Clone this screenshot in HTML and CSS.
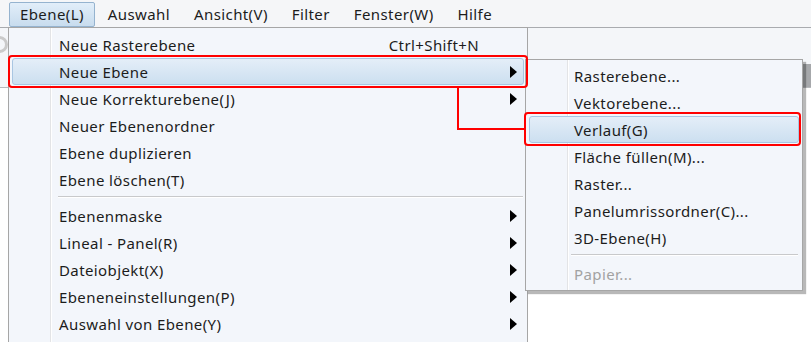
FILE: index.html
```html
<!DOCTYPE html>
<html>
<head>
    <title>Ebene Menü</title>
    <link rel="stylesheet" href="styles.css">
</head>
<body>
    <div class="window">
        <!-- Menu bar -->
        <div class="menubar">
            <span class="menubar-item active">Ebene(L)</span>
            <span class="menubar-item">Auswahl</span>
            <span class="menubar-item">Ansicht(V)</span>
            <span class="menubar-item">Filter</span>
            <span class="menubar-item">Fenster(W)</span>
            <span class="menubar-item">Hilfe</span>
        </div>
        <!-- Toolbar (mostly hidden behind the menu) -->
        <div class="toolbar">
            <span class="tool-icon"></span>
            <span class="tool-box"></span>
        </div>
        <div class="workspace"></div>

        <!-- Ebene menu -->
        <div class="menu main-menu">
            <div class="menu-item"><span class="label">Neue Rasterebene</span><span class="shortcut">Ctrl+Shift+N</span></div>
            <div class="menu-item selected"><span class="label">Neue Ebene</span><span class="arrow"></span></div>
            <div class="menu-item"><span class="label">Neue Korrekturebene(J)</span><span class="arrow"></span></div>
            <div class="menu-item"><span class="label">Neuer Ebenenordner</span></div>
            <div class="menu-item"><span class="label">Ebene duplizieren</span></div>
            <div class="menu-item"><span class="label">Ebene löschen(T)</span></div>
            <div class="separator"></div>
            <div class="menu-item"><span class="label">Ebenenmaske</span><span class="arrow"></span></div>
            <div class="menu-item"><span class="label">Lineal - Panel(R)</span><span class="arrow"></span></div>
            <div class="menu-item"><span class="label">Dateiobjekt(X)</span><span class="arrow"></span></div>
            <div class="menu-item"><span class="label">Ebeneneinstellungen(P)</span><span class="arrow"></span></div>
            <div class="menu-item"><span class="label">Auswahl von Ebene(Y)</span><span class="arrow"></span></div>
        </div>

        <!-- Neue Ebene submenu -->
        <div class="menu sub-menu">
            <div class="menu-item"><span class="label">Rasterebene...</span></div>
            <div class="menu-item"><span class="label">Vektorebene...</span></div>
            <div class="menu-item selected"><span class="label">Verlauf(G)</span></div>
            <div class="menu-item"><span class="label">Fläche füllen(M)...</span></div>
            <div class="menu-item"><span class="label">Raster...</span></div>
            <div class="menu-item"><span class="label">Panelumrissordner(C)...</span></div>
            <div class="menu-item"><span class="label">3D-Ebene(H)</span></div>
            <div class="separator"></div>
            <div class="menu-item disabled"><span class="label">Papier...</span></div>
        </div>

        <!-- Red annotation marks -->
        <div class="mark mark-main"></div>
        <div class="mark mark-sub"></div>
        <div class="mark-line"></div>
    </div>
</body>
</html>
```

FILE: styles.css
```css
body {
    margin: 0;
    font-family: "Noto Sans", "Liberation Sans", sans-serif;
    font-size: 15px;
    letter-spacing: 0.4px;
    color: #1c1c1c;
    background-color: #fff;
}

.window {
    position: relative;
    width: 811px;
    height: 342px;
    overflow: hidden;
    display: flex;
    flex-direction: column;
}

/* Menu bar */
.menubar {
    height: 27px;
    display: flex;
    align-items: center;
    padding-left: 9px;
    background-color: #f5f6f8;
    border-bottom: 1px solid #a9abaf;
}

.menubar-item {
    height: 23px;
    line-height: 22px;
    padding: 0 10px;
    margin-right: 2px;
    margin-top: 1px;
    border: 1px solid transparent;
    border-radius: 2px;
}

.menubar-item.active {
    border-color: #95b3cf;
    background: linear-gradient(#e2eef9, #c8dcee);
}

/* Toolbar */
.toolbar {
    height: 59px;
    background-color: #f4f6f9;
    border-bottom: 1px solid #b7b9bc;
    position: relative;
}

.tool-icon {
    position: absolute;
    left: -9px;
    top: 8px;
    width: 11px;
    height: 11px;
    border: 3px solid #cacaca;
    border-radius: 50%;
}

.tool-box {
    position: absolute;
    right: 0;
    top: 36px;
    width: 10px;
    height: 23px;
    background-color: #a6a8ab;
}

.workspace {
    flex: 1;
    background-color: #fff;
}

/* Menus */
.menu {
    position: absolute;
    background-color: #f3f6fb;
    border: 1px solid #a6a6a6;
    background-image: linear-gradient(#e3e4e6, #e3e4e6), linear-gradient(#fff, #fff);
    background-repeat: no-repeat;
    background-size: 1px 100%, 1px 100%;
}

.main-menu {
    left: 8px;
    top: 27px;
    width: 518px;
    padding: 3px 0 30px;
    background-position: 41px 0, 42px 0;
}

.sub-menu {
    left: 525px;
    top: 59px;
    width: 276px;
    padding: 2px 0 3px;
    background-position: 41px 0, 42px 0;
    box-shadow: 3px 3px 1px rgba(0, 0, 0, 0.28);
}

.menu-item {
    height: 25px;
    margin: 0 3px;
    padding: 0 6px 0 46px;
    display: flex;
    align-items: center;
    border: 1px solid transparent;
    border-radius: 3px;
    white-space: nowrap;
}

.sub-menu .menu-item {
    padding-left: 44px;
}

.menu-item .label {
    flex: 1;
}

.menu-item .shortcut {
    margin-right: 38px;
}

.menu-item.selected {
    border-color: #a9c6e2;
    background: linear-gradient(#e4eef8, #ccdff0);
}

.menu-item.disabled {
    color: #a2a2a2;
}

.arrow {
    width: 0;
    height: 0;
    border-left: 7px solid #000;
    border-top: 6px solid transparent;
    border-bottom: 6px solid transparent;
}

.separator {
    height: 1px;
    margin: 3px 4px 4px 49px;
    background-color: #c8c9cb;
    border-bottom: 1px solid #fff;
}

.sub-menu .separator {
    margin: 3px 4px 4px 45px;
}

/* Red annotation marks */
.mark {
    position: absolute;
    border: 2px solid #f00;
    border-radius: 4px;
}

.mark-main {
    left: 8px;
    top: 55px;
    width: 516px;
    height: 29px;
}

.mark-sub {
    left: 524px;
    top: 112px;
    width: 273px;
    height: 30px;
}

.mark-line {
    position: absolute;
    left: 457px;
    top: 86px;
    width: 67px;
    height: 42px;
    border-left: 2px solid #f00;
    border-bottom: 2px solid #f00;
}
```
